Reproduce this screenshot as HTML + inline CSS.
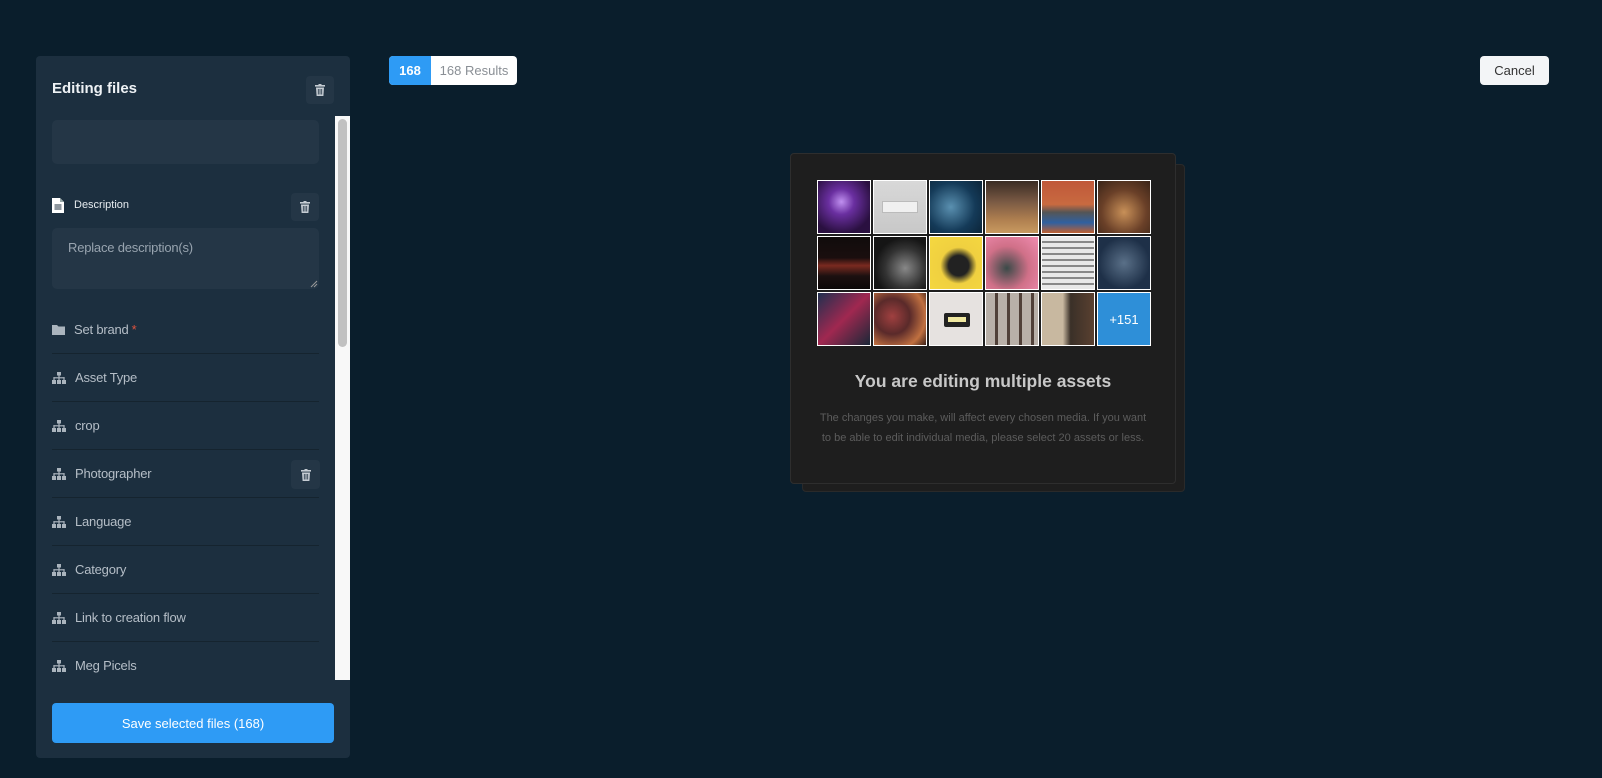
<!DOCTYPE html>
<html><head><meta charset="utf-8"><style>
*{box-sizing:border-box;margin:0;padding:0}
body{width:1602px;height:778px;background:#0a1e2c;font-family:"Liberation Sans",sans-serif;position:relative;overflow:hidden;color:#c5ccd3}
.abs{position:absolute}
.panel{left:36px;top:56px;width:314px;height:702px;background:#1c2f3f;border-radius:4px}
.trash{width:28px;height:28px;background:#243646;border-radius:4px;display:flex;align-items:center;justify-content:center}
.input{background:#243646;border-radius:5px}
.row{left:52px;width:267px;height:48px;border-top:1px solid #15242f;display:flex;align-items:center;font-size:13px;color:#b5bec7;letter-spacing:-0.2px}
.row svg{margin-right:9px}
.tile{width:54px;height:54px;border:1px solid #fff}
</style></head><body>
<div class="abs panel"></div>
<div class="abs" style="left:52px;top:80px;font-size:15px;font-weight:bold;color:#eef2f5">Editing files</div>
<div class="abs trash" style="left:306px;top:76px"><svg width="10" height="12" viewBox="0 0 10 12"><rect x="0" y="1" width="10" height="1.6" fill="#c5ccd3"/><rect x="3.5" y="0" width="3" height="1.5" fill="#c5ccd3"/><path d="M1 3.5h8l-.6 8.5H1.6z" fill="#c5ccd3"/><path d="M3.3 5v5.5M5 5v5.5M6.7 5v5.5" stroke="#243646" stroke-width=".8"/></svg></div>
<div class="abs input" style="left:52px;top:120px;width:267px;height:44px"></div>
<svg class="abs" style="left:52px;top:198px" width="12" height="15" viewBox="0 0 12 15"><path d="M0 0h8l4 4v11H0z" fill="#fff"/><path d="M8 0v4h4" fill="#9aa"/><path d="M2.5 7h7M2.5 9h7M2.5 11h7" stroke="#1c2f3f" stroke-width="1"/></svg>
<div class="abs" style="left:74px;top:199px;font-size:11px;color:#e6ebef">Description</div>
<div class="abs trash" style="left:291px;top:193px"><svg width="10" height="12" viewBox="0 0 10 12"><rect x="0" y="1" width="10" height="1.6" fill="#c5ccd3"/><rect x="3.5" y="0" width="3" height="1.5" fill="#c5ccd3"/><path d="M1 3.5h8l-.6 8.5H1.6z" fill="#c5ccd3"/><path d="M3.3 5v5.5M5 5v5.5M6.7 5v5.5" stroke="#243646" stroke-width=".8"/></svg></div>
<div class="abs input" style="left:52px;top:228px;width:267px;height:61px;padding:12px 16px;font-size:13px;color:#98a4af;letter-spacing:-0.2px">Replace description(s)</div>
<svg class="abs" style="left:310px;top:280px" width="8" height="8"><path d="M1 7L7 1M4 7L7 4" stroke="#999" stroke-width="1"/></svg>
<div class="abs row" style="top:305px;border-top:none"><svg width="13" height="11" viewBox="0 0 13 11"><path d="M0 1h5l1.5 1.5H13V11H0z" fill="#aab4bd"/></svg>Set brand <span style="color:#e0533e;margin-left:3px">*</span></div>
<div class="abs row" style="top:353px"><svg width="14" height="12" viewBox="0 0 14 12"><g fill="#aab4bd"><rect x="5" y="0" width="4" height="3.5"/><rect x="0" y="8" width="4" height="4"/><rect x="5" y="8" width="4" height="4"/><rect x="10" y="8" width="4" height="4"/><rect x="6.4" y="3" width="1.2" height="5"/><rect x="1.4" y="5.2" width="11.2" height="1.2"/><rect x="1.4" y="5.2" width="1.2" height="3"/><rect x="11.4" y="5.2" width="1.2" height="3"/></g></svg>Asset Type</div>
<div class="abs row" style="top:401px"><svg width="14" height="12" viewBox="0 0 14 12"><g fill="#aab4bd"><rect x="5" y="0" width="4" height="3.5"/><rect x="0" y="8" width="4" height="4"/><rect x="5" y="8" width="4" height="4"/><rect x="10" y="8" width="4" height="4"/><rect x="6.4" y="3" width="1.2" height="5"/><rect x="1.4" y="5.2" width="11.2" height="1.2"/><rect x="1.4" y="5.2" width="1.2" height="3"/><rect x="11.4" y="5.2" width="1.2" height="3"/></g></svg>crop</div>
<div class="abs row" style="top:449px"><svg width="14" height="12" viewBox="0 0 14 12"><g fill="#aab4bd"><rect x="5" y="0" width="4" height="3.5"/><rect x="0" y="8" width="4" height="4"/><rect x="5" y="8" width="4" height="4"/><rect x="10" y="8" width="4" height="4"/><rect x="6.4" y="3" width="1.2" height="5"/><rect x="1.4" y="5.2" width="11.2" height="1.2"/><rect x="1.4" y="5.2" width="1.2" height="3"/><rect x="11.4" y="5.2" width="1.2" height="3"/></g></svg>Photographer</div>
<div class="abs trash" style="left:291px;top:460px;width:29px;height:29px"><svg width="10" height="12" viewBox="0 0 10 12"><rect x="0" y="1" width="10" height="1.6" fill="#c5ccd3"/><rect x="3.5" y="0" width="3" height="1.5" fill="#c5ccd3"/><path d="M1 3.5h8l-.6 8.5H1.6z" fill="#c5ccd3"/><path d="M3.3 5v5.5M5 5v5.5M6.7 5v5.5" stroke="#243646" stroke-width=".8"/></svg></div>
<div class="abs row" style="top:497px"><svg width="14" height="12" viewBox="0 0 14 12"><g fill="#aab4bd"><rect x="5" y="0" width="4" height="3.5"/><rect x="0" y="8" width="4" height="4"/><rect x="5" y="8" width="4" height="4"/><rect x="10" y="8" width="4" height="4"/><rect x="6.4" y="3" width="1.2" height="5"/><rect x="1.4" y="5.2" width="11.2" height="1.2"/><rect x="1.4" y="5.2" width="1.2" height="3"/><rect x="11.4" y="5.2" width="1.2" height="3"/></g></svg>Language</div>
<div class="abs row" style="top:545px"><svg width="14" height="12" viewBox="0 0 14 12"><g fill="#aab4bd"><rect x="5" y="0" width="4" height="3.5"/><rect x="0" y="8" width="4" height="4"/><rect x="5" y="8" width="4" height="4"/><rect x="10" y="8" width="4" height="4"/><rect x="6.4" y="3" width="1.2" height="5"/><rect x="1.4" y="5.2" width="11.2" height="1.2"/><rect x="1.4" y="5.2" width="1.2" height="3"/><rect x="11.4" y="5.2" width="1.2" height="3"/></g></svg>Category</div>
<div class="abs row" style="top:593px"><svg width="14" height="12" viewBox="0 0 14 12"><g fill="#aab4bd"><rect x="5" y="0" width="4" height="3.5"/><rect x="0" y="8" width="4" height="4"/><rect x="5" y="8" width="4" height="4"/><rect x="10" y="8" width="4" height="4"/><rect x="6.4" y="3" width="1.2" height="5"/><rect x="1.4" y="5.2" width="11.2" height="1.2"/><rect x="1.4" y="5.2" width="1.2" height="3"/><rect x="11.4" y="5.2" width="1.2" height="3"/></g></svg>Link to creation flow</div>
<div class="abs row" style="top:641px"><svg width="14" height="12" viewBox="0 0 14 12"><g fill="#aab4bd"><rect x="5" y="0" width="4" height="3.5"/><rect x="0" y="8" width="4" height="4"/><rect x="5" y="8" width="4" height="4"/><rect x="10" y="8" width="4" height="4"/><rect x="6.4" y="3" width="1.2" height="5"/><rect x="1.4" y="5.2" width="11.2" height="1.2"/><rect x="1.4" y="5.2" width="1.2" height="3"/><rect x="11.4" y="5.2" width="1.2" height="3"/></g></svg>Meg Picels</div>
<div class="abs" style="left:335px;top:116px;width:15px;height:564px;background:#f8f8f8"></div>
<div class="abs" style="left:338px;top:119px;width:9px;height:228px;background:#c1c1c1;border-radius:5px"></div>
<div class="abs" style="left:52px;top:703px;width:282px;height:40px;background:#2e9bf5;border-radius:4px;color:#fff;font-size:13px;display:flex;align-items:center;justify-content:center">Save selected files (168)</div>

<div class="abs" style="left:389px;top:56px;width:128px;height:29px;background:#fff;border-radius:4px;overflow:hidden;display:flex;font-size:13px">
<div style="width:42px;background:#2e9bf5;color:#fff;display:flex;align-items:center;justify-content:center;font-weight:bold">168</div>
<div style="flex:1;display:flex;align-items:center;justify-content:center;color:#8a8f95">168 Results</div></div>
<div class="abs" style="left:1480px;top:56px;width:69px;height:29px;background:#f3f5f7;border-radius:4px;font-size:13px;color:#333;display:flex;align-items:center;justify-content:center">Cancel</div>

<div class="abs" style="left:802px;top:164px;width:383px;height:328px;background:#1e1e1e;border:1px solid #2a2a2a;border-radius:4px"></div>
<div class="abs" style="left:790px;top:153px;width:386px;height:331px;background:#1e1e1e;border:1px solid #2e2e2e;border-radius:4px"></div>
<div class="abs" style="left:817px;top:180px;display:grid;grid-template-columns:repeat(6,54px);gap:2px">
<div class="tile" style="background:radial-gradient(circle at 45% 40%,#c090f0,#6a2fa0 30%,#2a1040 75%)"></div>
<div class="tile" style="background:linear-gradient(#d8d8d8,#c8c8c8);position:relative"><div style="position:absolute;left:8px;top:20px;width:36px;height:12px;background:#f0f0f0;border:1px solid #bbb"></div></div>
<div class="tile" style="background:radial-gradient(circle at 40% 50%,#5a90b0,#143a58 60%,#0c2438)"></div>
<div class="tile" style="background:linear-gradient(#3a2c24 0%,#7a5a44 40%,#b08050 75%,#c89a60)"></div>
<div class="tile" style="background:linear-gradient(#c0583a 0%,#c86a40 45%,#555 60%,#3060a0 80%,#c06030)"></div>
<div class="tile" style="background:radial-gradient(circle at 50% 60%,#c89058,#6a4028 55%,#3a2418)"></div>
<div class="tile" style="background:linear-gradient(#100c0c 0%,#1a0e0e 40%,#7a2a20 55%,#1c1010 75%,#0c0808)"></div>
<div class="tile" style="background:radial-gradient(circle at 60% 60%,#888,#333 45%,#151515 70%)"></div>
<div class="tile" style="background:radial-gradient(circle at 55% 55%,#222 25%,#f0d040 45%,#f5d840)"></div>
<div class="tile" style="background:radial-gradient(circle at 40% 60%,#3a4a48,#d07088 50%,#f08cb0)"></div>
<div class="tile" style="background:repeating-linear-gradient(#e8e8e8 0 4px,#888 4px 6px)"></div>
<div class="tile" style="background:radial-gradient(circle at 50% 50%,#5a7088,#1e3048 70%)"></div>
<div class="tile" style="background:linear-gradient(135deg,#203050,#a02850 50%,#1a2838)"></div>
<div class="tile" style="background:radial-gradient(circle at 35% 45%,#a04040,#5a2a2a 40%,#c07040 75%,#3a2018)"></div>
<div class="tile" style="background:#e6e2e0;position:relative"><div style="position:absolute;left:14px;top:20px;width:26px;height:14px;background:#222;border-radius:2px"><div style="margin:4px;height:5px;background:#f0e8a0"></div></div></div>
<div class="tile" style="background:repeating-linear-gradient(90deg,#b8b0a8 0 9px,#504038 9px 12px)"></div>
<div class="tile" style="background:linear-gradient(90deg,#c8b8a0 0 40%,#3a3028 55%,#5a4030)"></div>
<div class="tile" style="background:#2e8fd8;color:#fff;font-size:13px;display:flex;align-items:center;justify-content:center">+151</div>
</div>
<div class="abs" style="left:790px;top:371px;width:386px;text-align:center;font-size:17.5px;font-weight:bold;color:#c8c8c8">You are editing multiple assets</div>
<div class="abs" style="left:818px;top:408px;width:330px;text-align:center;font-size:11px;line-height:20px;color:#5c5c5c">The changes you make, will affect every chosen media. If you want to be able to edit individual media, please select 20 assets or less.</div>
</body></html>
